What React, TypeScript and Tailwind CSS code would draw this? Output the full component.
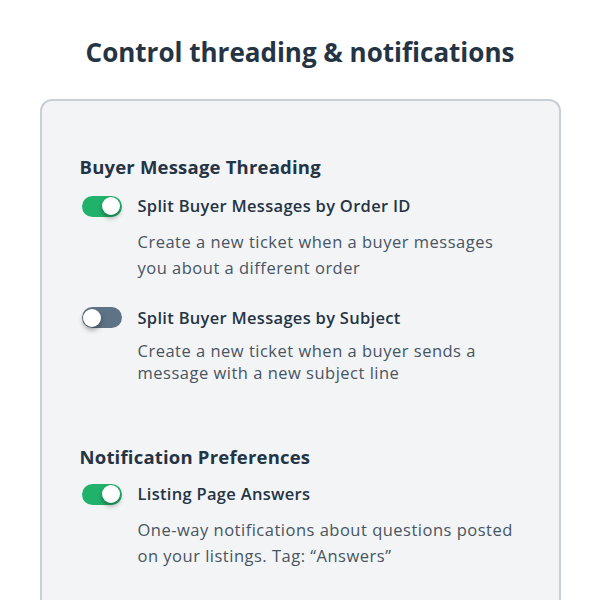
import React, { useState } from 'react';

const Toggle: React.FC<{ on: boolean; onChange: () => void }> = ({ on, onChange }) => (
  <button
    onClick={onChange}
    className={`relative shrink-0 w-[40px] h-[21px] rounded-full transition-colors ${on ? 'bg-[#20b26b]' : 'bg-[#5f7387]'}`}
  >
    <span
      className={`absolute top-[1.5px] w-[18px] h-[18px] rounded-full bg-white shadow-[0_3px_5px_rgba(0,0,0,0.35)] transition-all ${on ? 'left-[20.5px]' : 'left-[1.5px]'}`}
    />
  </button>
);

const Setting: React.FC<{ title: string; desc: string; on: boolean; onChange: () => void; tight?: boolean }> = ({ title, desc, on, onChange, tight }) => (
  <div className="flex flex-col">
    <div className="flex items-center gap-[16px] pl-[2px]">
      <Toggle on={on} onChange={onChange} />
      <span className="text-[16.5px] font-semibold tracking-[0.3px] text-[#253444]">{title}</span>
    </div>
    <p className={`pl-[58px] mt-[10px] text-[16.5px] tracking-[0.5px] text-[#475462] ${tight ? 'leading-[22px]' : 'leading-[26px]'}`}>{desc}</p>
  </div>
);

export default function App() {
  const [byOrder, setByOrder] = useState(true);
  const [bySubject, setBySubject] = useState(false);
  const [answers, setAnswers] = useState(true);

  return (
    <div className="w-[600px] h-[600px] overflow-hidden bg-white flex flex-col items-center" style={{ fontFamily: '"Open Sans", "Noto Sans", sans-serif' }}>
      <h1 className="mt-[33px] text-[26px] font-bold text-[#253444]">Control threading &amp; notifications</h1>

      <div className="mt-[27px] w-[521px] flex-1 bg-[#f3f4f6] border-2 border-[#c9cfd7] border-b-0 rounded-t-[12px] pt-[52px] px-[38px]">
        <h2 className="text-[18.5px] font-bold tracking-[0.2px] text-[#253444]">Buyer Message Threading</h2>
        <div className="mt-[13px] flex flex-col gap-[25px]">
          <Setting
            title="Split Buyer Messages by Order ID"
            desc="Create a new ticket when a buyer messages you about a different order"
            on={byOrder}
            onChange={() => setByOrder(!byOrder)}
          />
          <Setting
            title="Split Buyer Messages by Subject"
            desc="Create a new ticket when a buyer sends a message with a new subject line"
            on={bySubject}
            onChange={() => setBySubject(!bySubject)}
            tight
          />
        </div>

        <h2 className="mt-[59px] text-[18.5px] font-bold tracking-[0.2px] text-[#253444]">Notification Preferences</h2>
        <div className="mt-[11px]">
          <Setting
            title="Listing Page Answers"
            desc={'One-way notifications about questions posted on your listings. Tag: \u201cAnswers\u201d'}
            on={answers}
            onChange={() => setAnswers(!answers)}
          />
        </div>
      </div>
    </div>
  );
}
